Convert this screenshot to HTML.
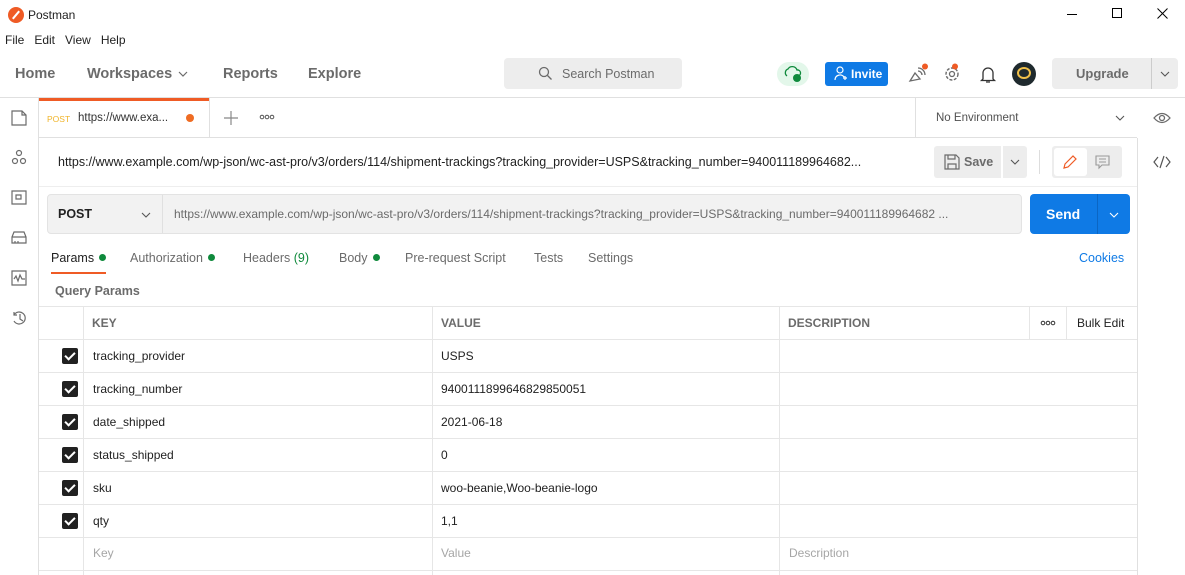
<!DOCTYPE html>
<html><head><meta charset="utf-8"><style>
*{box-sizing:border-box;margin:0;padding:0}
body{width:1185px;height:575px;overflow:hidden;background:#fff;font-family:"Liberation Sans",sans-serif;font-size:12px;color:#212121;position:relative}
.a{position:absolute}
.t{white-space:nowrap}
.g{color:#6b6b6b}
.dot{display:inline-block;width:7px;height:7px;border-radius:50%;background:#0f8a3c;margin-left:5px;vertical-align:1px}
.cb{position:absolute;left:62px;width:16px;height:16px;background:#212121;border-radius:2px}
.cb:after{content:"";position:absolute;left:5px;top:2px;width:4px;height:8px;border:solid #fff;border-width:0 2px 2px 0;transform:rotate(45deg)}
</style></head><body>
<!-- title bar -->
<div class="a" style="left:8px;top:7px;width:16px;height:16px;border-radius:50%;background:#ef5b25"></div>
<div class="a" style="left:15px;top:10px;width:2px;height:10px;background:#fff;transform:rotate(40deg)"></div>
<div class="a t" style="left:28px;top:8px;font-size:12px">Postman</div>
<div class="a" style="left:1067px;top:14px;width:10px;height:1px;background:#000"></div>
<div class="a" style="left:1112px;top:8px;width:10px;height:10px;border:1px solid #000"></div>
<svg class="a" style="left:1157px;top:8px" width="11" height="11"><path d="M0.5 0.5L10.5 10.5M10.5 0.5L0.5 10.5" stroke="#000" stroke-width="1"/></svg>
<div class="a t" style="left:5px;top:33px">File&nbsp;&nbsp;&nbsp;Edit&nbsp;&nbsp;&nbsp;View&nbsp;&nbsp;&nbsp;Help</div>
<!-- header -->
<div class="a t" style="left:15px;top:66px;font-size:14.5px;font-weight:bold;color:#6b6b6b">Home</div>
<div class="a t" style="left:87px;top:66px;font-size:14.5px;font-weight:bold;color:#6b6b6b">Workspaces</div>
<svg class="a" style="left:178px;top:71px" width="10" height="6"><path d="M1 1l4 4 4-4" fill="none" stroke="#6b6b6b" stroke-width="1.2"/></svg>
<div class="a t" style="left:223px;top:66px;font-size:14.5px;font-weight:bold;color:#6b6b6b">Reports</div>
<div class="a t" style="left:308px;top:66px;font-size:14.5px;font-weight:bold;color:#6b6b6b">Explore</div>
<div class="a" style="left:504px;top:58px;width:178px;height:31px;background:#ededed;border-radius:4px"></div>
<svg class="a" style="left:538px;top:66px" width="15" height="15"><circle cx="6" cy="6" r="4.5" fill="none" stroke="#6b6b6b" stroke-width="1.3"/><path d="M9.5 9.5L13.5 13.5" stroke="#6b6b6b" stroke-width="1.3"/></svg>
<div class="a t g" style="left:562px;top:67px;font-size:12.5px">Search Postman</div>
<div class="a" style="left:777px;top:62px;width:32px;height:24px;background:#e3f7ea;border-radius:12px"></div>
<svg class="a" style="left:783px;top:64px" width="22" height="20"><path d="M4 12a4 4 0 0 1 1-7a5 5 0 0 1 9 1a3 3 0 0 1 1 6" fill="none" stroke="#0f8a3c" stroke-width="1.3"/><circle cx="14" cy="14" r="4" fill="#0f8a3c"/></svg>
<div class="a" style="left:825px;top:62px;width:63px;height:24px;background:#0f7ae5;border-radius:3px"></div>
<div class="a t" style="left:851px;top:67px;color:#fff;font-weight:bold;font-size:12px">Invite</div>
<svg class="a" style="left:834px;top:66px" width="14" height="15"><circle cx="6" cy="4" r="3" fill="none" stroke="#fff" stroke-width="1.2"/><path d="M1 14a5 5 0 0 1 9-3 M9 12h4 M11 10v4" fill="none" stroke="#fff" stroke-width="1.2"/></svg>
<svg class="a" style="left:906px;top:63px" width="24" height="22"><path d="M4 18l5-8 5 6z M12 8a4 4 0 0 1 4 4 M12 5a7 7 0 0 1 7 7" fill="none" stroke="#6b6b6b" stroke-width="1.3"/><circle cx="19" cy="3.5" r="3" fill="#ef5b25"/></svg>
<svg class="a" style="left:942px;top:63px" width="22" height="22"><circle cx="10" cy="11" r="6" fill="none" stroke="#6b6b6b" stroke-width="1.4" stroke-dasharray="3 1.5"/><circle cx="10" cy="11" r="2.5" fill="none" stroke="#6b6b6b" stroke-width="1.3"/><circle cx="13" cy="3.5" r="3" fill="#ef5b25"/></svg>
<svg class="a" style="left:979px;top:64px" width="18" height="20"><path d="M4 15V9a5 5 0 0 1 10 0v6l1.5 1.5h-13z M7 18h4" fill="none" stroke="#333" stroke-width="1.3"/></svg>
<div class="a" style="left:1012px;top:62px;width:24px;height:24px;border-radius:50%;background:#1f2a2e"></div>
<div class="a" style="left:1017px;top:67px;width:14px;height:12px;border-radius:50%;border:2px solid #f0c04a"></div>
<div class="a" style="left:1052px;top:58px;width:126px;height:31px;background:#ededed;border-radius:4px"></div>
<div class="a" style="left:1151px;top:58px;width:1px;height:31px;background:#ccc"></div>
<div class="a t" style="left:1076px;top:66px;font-size:13px;font-weight:bold;color:#6b6b6b">Upgrade</div>
<svg class="a" style="left:1160px;top:71px" width="10" height="6"><path d="M1 1l4 4 4-4" fill="none" stroke="#555" stroke-width="1.1"/></svg>
<div class="a" style="left:0;top:97px;width:1185px;height:1px;background:#e0e0e0"></div>
<!-- left sidebar -->
<div class="a" style="left:38px;top:98px;width:1px;height:477px;background:#e0e0e0"></div>
<svg class="a" style="left:10px;top:109px" width="18" height="220" fill="none" stroke="#6b6b6b" stroke-width="1.2">
<path d="M2 2h10l4 4v10H2z M12 2v4h4"/>
<g transform="translate(0,40)"><circle cx="9" cy="4" r="2.5"/><circle cx="5" cy="12" r="2.5"/><circle cx="13" cy="12" r="2.5"/></g>
<g transform="translate(0,80)"><path d="M2 2h14v13H2z M6 6h5v4H6z"/></g>
<g transform="translate(0,120)"><path d="M2 8l2-5h10l2 5v6H2z M2 8h14 M5 12v2 M8 12v2"/></g>
<g transform="translate(0,160)"><path d="M2 2h14v14H2z M4 10l2-3 2 5 2-6 2 4h3"/></g>
<g transform="translate(0,200)"><path d="M4 6a6 6 0 1 1 0 6 M4 3v3h3 M10 5v5l3 2"/></g>
</svg>
<!-- tab row -->
<div class="a" style="left:39px;top:98px;width:171px;height:3px;background:#ef5b25"></div>
<div class="a" style="left:209px;top:98px;width:1px;height:40px;background:#e0e0e0"></div>
<div class="a t" style="left:47px;top:114px;font-size:8.5px;color:#f0b429">POST</div>
<div class="a t" style="left:78px;top:112px;font-size:11.5px;color:#333">https://www.exa...</div>
<div class="a" style="left:186px;top:114px;width:8px;height:8px;border-radius:50%;background:#ef6c23"></div>
<svg class="a" style="left:224px;top:111px" width="14" height="14"><path d="M7 0v14M0 7h14" stroke="#888" stroke-width="1.2"/></svg>
<svg class="a" style="left:259px;top:114px" width="16" height="6" fill="none" stroke="#555" stroke-width="1"><circle cx="3" cy="3" r="1.8"/><circle cx="8" cy="3" r="1.8"/><circle cx="13" cy="3" r="1.8"/></svg>
<div class="a" style="left:915px;top:98px;width:1px;height:40px;background:#e0e0e0"></div>
<div class="a t" style="left:936px;top:112px;font-size:11.5px;color:#505050">No Environment</div>
<svg class="a" style="left:1115px;top:115px" width="10" height="6"><path d="M1 1l4 4 4-4" fill="none" stroke="#555" stroke-width="1.1"/></svg>
<svg class="a" style="left:1153px;top:111px" width="18" height="14"><path d="M1 7q8-9 16 0q-8 9-16 0z" fill="none" stroke="#6b6b6b" stroke-width="1.3"/><circle cx="9" cy="7" r="2.5" fill="none" stroke="#6b6b6b" stroke-width="1.3"/></svg>
<div class="a" style="left:39px;top:137px;width:1098px;height:1px;background:#e0e0e0"></div>
<!-- right sidebar -->
<div class="a" style="left:1137px;top:138px;width:1px;height:437px;background:#e0e0e0"></div>
<svg class="a" style="left:1153px;top:155px" width="18" height="14" fill="none" stroke="#555" stroke-width="1.2"><path d="M5 2L1 7l4 5 M13 2l4 5-4 5 M11 1L7 13"/></svg>
<!-- url title -->
<div class="a t" style="left:58px;top:155px;font-size:12.5px;color:#212121">https://www.example.com/wp-json/wc-ast-pro/v3/orders/114/shipment-trackings?tracking_provider=USPS&amp;tracking_number=940011189964682...</div>
<div class="a" style="left:934px;top:146px;width:67px;height:32px;background:#ededed;border-radius:3px 0 0 3px"></div>
<div class="a" style="left:1003px;top:146px;width:24px;height:32px;background:#ededed;border-radius:0 3px 3px 0"></div>
<svg class="a" style="left:944px;top:154px" width="16" height="16" fill="none" stroke="#6b6b6b" stroke-width="1.2"><path d="M1 1h11l3 3v11H1z M4 1v4h7V1 M4 15v-5h8v5"/></svg>
<div class="a t" style="left:964px;top:155px;font-size:12.5px;font-weight:bold;color:#6b6b6b">Save</div>
<svg class="a" style="left:1010px;top:159px" width="10" height="6"><path d="M1 1l4 4 4-4" fill="none" stroke="#555" stroke-width="1.1"/></svg>
<div class="a" style="left:1039px;top:150px;width:1px;height:24px;background:#ddd"></div>
<div class="a" style="left:1052px;top:146px;width:70px;height:32px;background:#ededed;border-radius:3px"></div>
<div class="a" style="left:1054px;top:148px;width:33px;height:28px;background:#fff;border-radius:3px"></div>
<svg class="a" style="left:1062px;top:154px" width="16" height="16"><path d="M2 14l1-4 8-8 3 3-8 8z" fill="none" stroke="#ef5b25" stroke-width="1.2"/></svg>
<svg class="a" style="left:1095px;top:154px" width="16" height="16"><path d="M1 2h13v9H7l-3 3v-3H1z M4 5h7M4 8h7" fill="none" stroke="#999" stroke-width="1.1"/></svg>
<div class="a" style="left:39px;top:186px;width:1098px;height:1px;background:#eee"></div>
<!-- request row -->
<div class="a" style="left:47px;top:194px;width:975px;height:40px;background:#f2f2f2;border:1px solid #e3e3e3;border-radius:4px"></div>
<div class="a" style="left:162px;top:195px;width:1px;height:38px;background:#e0e0e0"></div>
<div class="a t" style="left:58px;top:207px;font-size:12.5px;font-weight:bold;color:#212121">POST</div>
<svg class="a" style="left:141px;top:212px" width="10" height="6"><path d="M1 1l4 4 4-4" fill="none" stroke="#555" stroke-width="1.1"/></svg>
<div class="a t" style="left:174px;top:207px;font-size:12px;color:#6b6b6b">https://www.example.com/wp-json/wc-ast-pro/v3/orders/114/shipment-trackings?tracking_provider=USPS&amp;tracking_number=940011189964682 ...</div>
<div class="a" style="left:1030px;top:194px;width:100px;height:40px;background:#0f7ae5;border-radius:4px"></div>
<div class="a" style="left:1097px;top:194px;width:1px;height:40px;background:#0b66c4"></div>
<div class="a t" style="left:1046px;top:206px;font-size:14px;font-weight:bold;color:#fff">Send</div>
<svg class="a" style="left:1109px;top:212px" width="10" height="6"><path d="M1 1l4 4 4-4" fill="none" stroke="#fff" stroke-width="1.1"/></svg>
<!-- tabs -->
<div class="a t" style="left:51px;top:251px;font-size:12.5px;color:#212121">Params<span class="dot"></span></div>
<div class="a" style="left:51px;top:272px;width:55px;height:2px;background:#ef5b25"></div>
<div class="a t g" style="left:130px;top:251px;font-size:12.5px">Authorization<span class="dot"></span></div>
<div class="a t g" style="left:243px;top:251px;font-size:12.5px">Headers <span style="color:#0f8a3c">(9)</span></div>
<div class="a t g" style="left:339px;top:251px;font-size:12.5px">Body<span class="dot"></span></div>
<div class="a t g" style="left:405px;top:251px;font-size:12.5px">Pre-request Script</div>
<div class="a t g" style="left:534px;top:251px;font-size:12.5px">Tests</div>
<div class="a t g" style="left:588px;top:251px;font-size:12.5px">Settings</div>
<div class="a t" style="left:1079px;top:251px;font-size:12.5px;color:#0f7ae5">Cookies</div>
<div class="a t" style="left:55px;top:284px;font-size:12.5px;font-weight:bold;color:#6b6b6b">Query Params</div>
<!-- table -->
<div class="a" style="left:39px;top:306px;width:1098px;height:1px;background:#e6e6e6"></div>
<div class="a" style="left:83px;top:306px;width:1px;height:269px;background:#e6e6e6"></div>
<div class="a" style="left:432px;top:306px;width:1px;height:269px;background:#e6e6e6"></div>
<div class="a" style="left:779px;top:306px;width:1px;height:269px;background:#e6e6e6"></div>
<div class="a" style="left:1029px;top:306px;width:1px;height:33px;background:#e6e6e6"></div>
<div class="a" style="left:1066px;top:306px;width:1px;height:33px;background:#e6e6e6"></div>
<div class="a t" style="left:92px;top:316px;font-weight:bold;color:#6b6b6b">KEY</div>
<div class="a t" style="left:441px;top:316px;font-weight:bold;color:#6b6b6b">VALUE</div>
<div class="a t" style="left:788px;top:316px;font-weight:bold;color:#6b6b6b">DESCRIPTION</div>
<svg class="a" style="left:1040px;top:320px" width="16" height="6" fill="none" stroke="#333" stroke-width="1"><circle cx="3" cy="3" r="1.8"/><circle cx="8" cy="3" r="1.8"/><circle cx="13" cy="3" r="1.8"/></svg>
<div class="a t" style="left:1077px;top:316px;color:#212121">Bulk Edit</div>
<div class="a" style="left:39px;top:339px;width:1098px;height:1px;background:#e6e6e6"></div>
<div class="a" style="left:39px;top:372px;width:1098px;height:1px;background:#e6e6e6"></div>
<div class="a" style="left:39px;top:405px;width:1098px;height:1px;background:#e6e6e6"></div>
<div class="a" style="left:39px;top:438px;width:1098px;height:1px;background:#e6e6e6"></div>
<div class="a" style="left:39px;top:471px;width:1098px;height:1px;background:#e6e6e6"></div>
<div class="a" style="left:39px;top:504px;width:1098px;height:1px;background:#e6e6e6"></div>
<div class="a" style="left:39px;top:537px;width:1098px;height:1px;background:#e6e6e6"></div>
<div class="a" style="left:39px;top:570px;width:1098px;height:1px;background:#e6e6e6"></div>
<div class="cb" style="top:348px"></div><div class="a t" style="left:93px;top:349px">tracking_provider</div><div class="a t" style="left:441px;top:349px">USPS</div>
<div class="cb" style="top:381px"></div><div class="a t" style="left:93px;top:382px">tracking_number</div><div class="a t" style="left:441px;top:382px">9400111899646829850051</div>
<div class="cb" style="top:414px"></div><div class="a t" style="left:93px;top:415px">date_shipped</div><div class="a t" style="left:441px;top:415px">2021-06-18</div>
<div class="cb" style="top:447px"></div><div class="a t" style="left:93px;top:448px">status_shipped</div><div class="a t" style="left:441px;top:448px">0</div>
<div class="cb" style="top:480px"></div><div class="a t" style="left:93px;top:481px">sku</div><div class="a t" style="left:441px;top:481px">woo-beanie,Woo-beanie-logo</div>
<div class="cb" style="top:513px"></div><div class="a t" style="left:93px;top:514px">qty</div><div class="a t" style="left:441px;top:514px">1,1</div>
<div class="a t" style="left:93px;top:546px;color:#a6a6a6">Key</div><div class="a t" style="left:441px;top:546px;color:#a6a6a6">Value</div><div class="a t" style="left:789px;top:546px;color:#a6a6a6">Description</div>
</body></html>
